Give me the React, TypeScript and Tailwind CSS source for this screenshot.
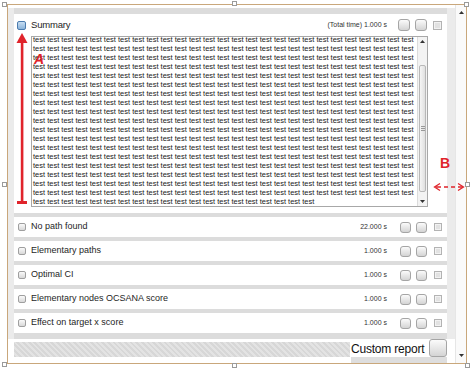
import React from 'react';

const line = (n: number) => Array(n).fill('test').join(' ');

const rows = [
  { label: 'No path found', time: '22.000 s' },
  { label: 'Elementary paths', time: '1.000 s' },
  { label: 'Optimal CI', time: '1.000 s' },
  { label: 'Elementary nodes OCSANA score', time: '1.000 s' },
  { label: 'Effect on target x score', time: '1.000 s' },
];

const handles = [
  'left-[2px] top-[2px]',
  'left-[232px] top-[1px]',
  'left-[464px] top-[2px]',
  'left-[2px] top-[182px]',
  'left-[465px] top-[182px]',
  'left-[2px] top-[362px]',
  'left-[232px] top-[363px]',
  'left-[465px] top-[363px]',
];

const Btn = ({ size = 'w-[11px] h-[11px]' }: { size?: string }) => (
  <div className={`${size} shrink-0 rounded-[3px] border border-[#a5a5a5] bg-linear-to-b from-[#fbfbfb] to-[#d4d4d4]`} />
);

const SmallCheck = ({ size = 'w-[8px] h-[8px]' }: { size?: string }) => (
  <div className={`${size} shrink-0 border border-[#b3b3b3] bg-[#e2e2e2] shadow-[inset_0_0_0_1px_#f2f2f2]`} />
);

const Arrow = ({ up }: { up?: boolean }) => (
  <svg width="5" height="3" viewBox="0 0 5 3">
    <path d={up ? 'M0 3 L2.5 0 L5 3 Z' : 'M0 0 L2.5 3 L5 0 Z'} fill="#333" />
  </svg>
);

export default function App() {
  return (
    <div className="relative w-[474px] h-[369px] bg-white overflow-hidden pl-[7px] pt-[4px] font-['Liberation_Sans',Arial,sans-serif] text-[#1e1e1e]">
      <div className="w-[460px] h-[360px] border border-[#c9a77b] flex">
        {/* content */}
        <div className="w-[447px] flex flex-col bg-white">
          <div className="h-[3px] shrink-0" />
          <div className="bg-[#ebebeb] pl-[6px] pr-[8px]">
            <div className="bg-[#dcdcdc] pt-[6px] pb-[6px] flex flex-col gap-[4px]">
              {/* summary */}
              <div className="h-[199px] bg-white flex flex-col">
                <div className="h-[22px] flex items-center pl-[3px] pr-[5px]">
                  <div className="w-[9px] h-[9px] rounded-[2px] border border-[#4c7cae] bg-linear-to-b from-[#c8def2] to-[#8cb4da]" />
                  <span className="ml-[5px] text-[9.5px] tracking-[-0.2px]">Summary</span>
                  <span className="ml-auto text-[7px] text-[#333]">(Total time) 1.000 s</span>
                  <div className="ml-[11px] flex gap-[5px]">
                    <Btn size="w-[12px] h-[12px]" />
                    <Btn size="w-[12px] h-[12px]" />
                  </div>
                  <div className="ml-[6px]">
                    <SmallCheck size="w-[9px] h-[9px]" />
                  </div>
                </div>
                <div className="ml-[17px] w-[397px] h-[171px] border border-[#a8a8a8] flex">
                  <div className="flex-1 overflow-hidden pl-[1px] text-[7.5px] leading-[9px] text-[#1a1a1a] whitespace-nowrap">
                    <div className="-mt-[2px]">
                      {Array.from({ length: 18 }).map((_, i) => (
                        <div key={i}>{line(27)}</div>
                      ))}
                      <div>{line(20)}</div>
                    </div>
                  </div>
                  <div className="w-[10px] bg-[#f3f3f3] border-l border-[#dcdcdc] flex flex-col">
                    <div className="h-[9px] flex items-center justify-center">
                      <Arrow up />
                    </div>
                    <div className="flex-1 pt-[19px] pb-[4px] px-[1px]">
                      <div className="h-[127px] rounded-[2px] border border-[#b8b8b8] bg-linear-to-r from-[#f6f6f6] to-[#e0e0e0] flex flex-col items-center justify-center gap-[1px]">
                        <div className="w-[4px] h-px bg-[#999]" />
                        <div className="w-[4px] h-px bg-[#999]" />
                        <div className="w-[4px] h-px bg-[#999]" />
                      </div>
                    </div>
                    <div className="h-[9px] flex items-center justify-center">
                      <Arrow />
                    </div>
                  </div>
                </div>
              </div>

              {rows.map((r) => (
                <div key={r.label} className="h-[20px] bg-white flex items-center pl-[4px] pr-[5px]">
                  <div className="w-[8px] h-[8px] rounded-[2px] border border-[#9f9f9f] bg-linear-to-b from-[#fafafa] to-[#d8d8d8]" />
                  <span className="ml-[5px] text-[9px]">{r.label}</span>
                  <span className="ml-auto text-[7px] text-[#333]">{r.time}</span>
                  <div className="ml-[13px] flex gap-[5px]">
                    <Btn />
                    <Btn />
                  </div>
                  <div className="ml-[7px]">
                    <SmallCheck />
                  </div>
                </div>
              ))}
            </div>
          </div>

          {/* bottom bar */}
          <div className="h-[18px] flex items-end pl-[6px] pr-[8px]">
            <div className="w-[336px] h-[15px] bg-[repeating-linear-gradient(45deg,#d7d7d7_0px,#d7d7d7_2px,#e3e3e3_2px,#e3e3e3_4px)]" />
            <span className="ml-[1px] text-[12px] leading-[15px] tracking-[-0.2px] text-[#111]">Custom report</span>
            <div className="ml-auto">
              <Btn size="w-[18px] h-[18px]" />
            </div>
          </div>
          <div className="flex-1 flex pr-[8px]">
            <div className="ml-auto w-[96px] h-[6px] bg-[#dedede]" />
          </div>
        </div>

        {/* outer scrollbar */}
        <div className="w-[11px] flex flex-col justify-between items-center bg-[#fafafa] border-l border-[#e6e6e6] py-[6px]">
          <Arrow up />
          <Arrow />
        </div>
      </div>

      {/* selection handles */}
      {handles.map((h) => (
        <div key={h} className={`absolute ${h} w-[5px] h-[5px] bg-white border border-[#9a9a9a]`} />
      ))}

      {/* annotations */}
      <svg className="absolute left-0 top-0" width="474" height="369" viewBox="0 0 474 369">
        <path d="M22 33 L16.5 43 L27.5 43 Z" fill="#e0242b" />
        <rect x="20.8" y="42" width="2.6" height="161" fill="#e0242b" />
        <rect x="17" y="201" width="10" height="3" fill="#e0242b" />
        <g stroke="#e0242b" strokeWidth="1.3" fill="none">
          <path d="M440 183.5 L434.5 187 L440 190.5" />
          <path d="M436 187 H441 M444 187 H448" />
          <path d="M451 187 H455 M458 187 H463" />
          <path d="M458 183.5 L463.5 187 L458 190.5" />
        </g>
      </svg>
      <span className="absolute left-[34px] top-[52px] text-[14px] leading-[14px] font-bold italic text-[#e0242b]">A</span>
      <span className="absolute left-[440px] top-[156px] text-[14px] leading-[14px] font-bold text-[#e0242b]">B</span>
    </div>
  );
}
